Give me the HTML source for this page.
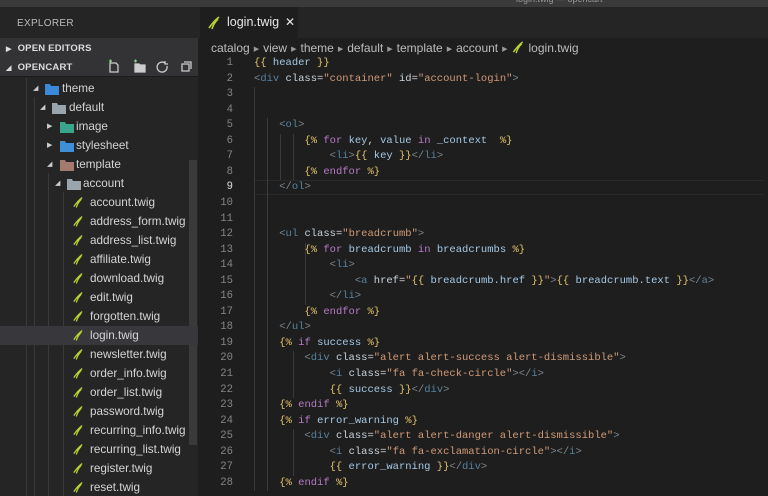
<!DOCTYPE html>
<html><head><meta charset="utf-8"><style>
*{margin:0;padding:0;box-sizing:border-box}
html{width:768px;height:496px;overflow:hidden}
body{width:768px;height:496px;overflow:hidden;background:#1e1e1e;font-family:"Liberation Sans",sans-serif;position:relative}
.title{position:absolute;left:0;top:0;width:768px;height:7px;background:#3a3a3a;color:#999;font-size:9px;line-height:2px;text-align:left;overflow:hidden}
.title span{position:absolute;left:516px;top:-2px}
.side{position:absolute;left:0;top:7px;width:198px;height:489px;background:#252526;overflow:hidden}
.tabs{position:absolute;left:198px;top:7px;width:570px;height:31px;background:#252526}
.tab{position:absolute;left:2px;top:0;width:98px;height:31px;background:#1e1e1e;color:#e8e8e8;font-size:12.5px;line-height:31px}
.exp{position:absolute;left:17px;top:11px;font-size:10px;color:#bbb;letter-spacing:.3px}
.sec{position:absolute;left:0;top:31px;width:198px;height:39px;background:#333336;border-bottom:1px solid #1b1b1b}
.sec div{position:absolute;left:17px;font-size:9.5px;font-weight:bold;color:#ddd;letter-spacing:.2px}
.row{position:absolute;height:19px;line-height:19px;font-size:11.7px;color:#d4d4d4;white-space:nowrap;left:0;width:198px}
.row.sel{background:#38383c}
.arr{position:absolute;font-size:7px;color:#ccc}
.guide{position:absolute;width:1px;background:#3a3a3a}
.sb{position:absolute;left:189px;top:153px;width:8px;height:285px;background:#3a3a3b}
.crumb{position:absolute;left:211px;top:41px;font-size:12px;color:#bdbdbd;white-space:nowrap}
.crumb i{font-style:normal;font-size:7px;color:#999;margin:0 4px;position:relative;top:-1px}
.code{position:absolute;left:0;top:56px;width:768px;height:440px;overflow:hidden;font-family:"Liberation Mono",monospace;font-size:10.5px;white-space:pre}
.ln{position:absolute;left:200px;width:33px;text-align:right;color:#858585;font-family:"Liberation Mono",monospace;font-size:10.6px}
.cl{position:absolute;left:254px;color:#d4d4d4}
.ln,.cl{height:15.55px;line-height:15.55px}
.t{color:#56819f}.b{color:#7e8a93}.a{color:#c8d3dc}.s{color:#d19a78}.y{color:#e3c26a}.k{color:#b77ac7}.v{color:#a6c9e6}
.cur{position:absolute;left:254px;width:510px;height:15px;border-top:1px solid #2a2a2a;border-bottom:1px solid #2a2a2a}
.vg{position:absolute;width:1px;background:#3a3a3a}
</style></head><body>
<div class="title"><span>login.twig — opencart</span></div>
<div class="side">
<div class="exp">EXPLORER</div>
<div class="sec"><div style="top:5px"><span style="font-size:7px;margin-left:-11px;margin-right:6px">▶</span>OPEN EDITORS</div><div style="top:24px"><span style="font-size:7px;margin-left:-11px;margin-right:6px">◢</span>OPENCART</div>
<svg style="position:absolute;left:106px;top:20px" width="90" height="16" viewBox="0 0 90 16"><g fill="none" stroke="#ccc" stroke-width="1.3"><path d="M4 5v9h8V7l-2-2z"/><path d="M3 3h3M4.5 1.5v3" stroke="#8c8"/><path d="M29 6h4l1 1h5v7h-10z" fill="#ccc"/><path d="M28 3h3M29.5 1.5v3" stroke="#8c8"/><path d="M59 5a5 5 0 1 0 2 3"/><path d="M59 3v3h3"/><path d="M76 6h7v7h-7z"/><path d="M78 4h7v7"/></g></svg>
</div>
<div class="guide" style="left:26px;top:71px;height:418px"></div>
<div class="guide" style="left:34px;top:90px;height:399px"></div>
<div class="guide" style="left:48px;top:166px;height:323px"></div>
<div class="guide" style="left:63px;top:185px;height:304px"></div>
<div class="sb"></div>
<div id="tree"></div>
</div>
<div class="tabs"><div class="tab"><svg style="position:absolute;left:8px;top:9px" width="12" height="14" viewBox="0 0 12 14"><path d="M1 12c2-3 5-7 10-11M4 13c1-4 3-7 6-10" stroke="#b5d334" stroke-width="1.6" fill="none"/></svg><span style="position:absolute;left:27px">login.twig</span><span style="position:absolute;left:85px;font-size:12px">✕</span></div></div>
<div class="crumb">catalog<i>▶</i>view<i>▶</i>theme<i>▶</i>default<i>▶</i>template<i>▶</i>account<i>▶</i><svg width="12" height="13" viewBox="0 0 12 14" style="vertical-align:-2px;margin-right:5px"><path d="M1 12c2-3 5-7 10-11M4 13c1-4 3-7 6-10" stroke="#b5d334" stroke-width="1.6" fill="none"/></svg>login.twig</div>
<div class="code" id="code"></div>
<script>
var tw='<svg width="10" height="13" viewBox="0 0 12 14"><path d="M1 12c2-3 5-7 10-11M4 13c1-4 3-7 6-10" stroke="#b5d334" stroke-width="1.6" fill="none"/></svg>';
function fold(c){return '<svg width="14" height="12" viewBox="0 0 14 12"><path d="M0 1h5l1 2h8v9H0z" fill="'+c+'"/></svg>'}
var rows=[
[33,45,62,'◢',fold('#3b8ad9'),'theme'],
[40,52,69,'◢',fold('#9aa4ad'),'default'],
[47,60,76,'▶',fold('#3aa58a'),'image'],
[47,60,76,'▶',fold('#3f8fd8'),'stylesheet'],
[47,60,76,'◢',fold('#a47a6e'),'template'],
[55,67,83,'◢',fold('#9aa4ad'),'account']];
var files=['account.twig','address_form.twig','address_list.twig','affiliate.twig','download.twig','edit.twig','forgotten.twig','login.twig','newsletter.twig','order_info.twig','order_list.twig','password.twig','recurring_info.twig','recurring_list.twig','register.twig','reset.twig'];
var h='';var y=71.5;
rows.forEach(function(r){h+='<div class="row" style="top:'+y+'px"><span class="arr" style="left:'+r[0]+'px">'+r[3]+'</span><span style="position:absolute;left:'+r[1]+'px;top:3px;height:12px">'+r[4]+'</span><span style="position:absolute;left:'+r[2]+'px">'+r[5]+'</span></div>';y+=19;});
files.forEach(function(f){h+='<div class="row'+(f=='login.twig'?' sel':'')+'" style="top:'+y+'px"><span style="position:absolute;left:73px;top:3px">'+tw+'</span><span style="position:absolute;left:90px">'+f+'</span></div>';y+=19;});
document.getElementById('tree').innerHTML=h;
var L=[
'<span class="y">{{</span> <span class="v">header</span> <span class="y">}}</span>',
'<span class="b">&lt;</span><span class="t">div</span> <span class="a">class</span>=<span class="s">"container"</span> <span class="a">id</span>=<span class="s">"account-login"</span><span class="b">&gt;</span>',
'','',
'    <span class="b">&lt;</span><span class="t">ol</span><span class="b">&gt;</span>',
'        <span class="y">{%</span> <span class="k">for</span> <span class="v">key</span>, <span class="v">value</span> <span class="k">in</span> <span class="v">_context</span>  <span class="y">%}</span>',
'            <span class="b">&lt;</span><span class="t">li</span><span class="b">&gt;</span><span class="y">{{</span> <span class="v">key</span> <span class="y">}}</span><span class="b">&lt;/</span><span class="t">li</span><span class="b">&gt;</span>',
'        <span class="y">{%</span> <span class="k">endfor</span> <span class="y">%}</span>',
'    <span class="b">&lt;/</span><span class="t">ol</span><span class="b">&gt;</span>',
'','',
'    <span class="b">&lt;</span><span class="t">ul</span> <span class="a">class</span>=<span class="s">"breadcrumb"</span><span class="b">&gt;</span>',
'        <span class="y">{%</span> <span class="k">for</span> <span class="v">breadcrumb</span> <span class="k">in</span> <span class="v">breadcrumbs</span> <span class="y">%}</span>',
'            <span class="b">&lt;</span><span class="t">li</span><span class="b">&gt;</span>',
'                <span class="b">&lt;</span><span class="t">a</span> <span class="a">href</span>=<span class="s">"</span><span class="y">{{</span> <span class="v">breadcrumb.href</span> <span class="y">}}</span><span class="s">"</span><span class="b">&gt;</span><span class="y">{{</span> <span class="v">breadcrumb.text</span> <span class="y">}}</span><span class="b">&lt;/</span><span class="t">a</span><span class="b">&gt;</span>',
'            <span class="b">&lt;/</span><span class="t">li</span><span class="b">&gt;</span>',
'        <span class="y">{%</span> <span class="k">endfor</span> <span class="y">%}</span>',
'    <span class="b">&lt;/</span><span class="t">ul</span><span class="b">&gt;</span>',
'    <span class="y">{%</span> <span class="k">if</span> <span class="v">success</span> <span class="y">%}</span>',
'        <span class="b">&lt;</span><span class="t">div</span> <span class="a">class</span>=<span class="s">"alert alert-success alert-dismissible"</span><span class="b">&gt;</span>',
'            <span class="b">&lt;</span><span class="t">i</span> <span class="a">class</span>=<span class="s">"fa fa-check-circle"</span><span class="b">&gt;&lt;/</span><span class="t">i</span><span class="b">&gt;</span>',
'            <span class="y">{{</span> <span class="v">success</span> <span class="y">}}</span><span class="b">&lt;/</span><span class="t">div</span><span class="b">&gt;</span>',
'    <span class="y">{%</span> <span class="k">endif</span> <span class="y">%}</span>',
'    <span class="y">{%</span> <span class="k">if</span> <span class="v">error_warning</span> <span class="y">%}</span>',
'        <span class="b">&lt;</span><span class="t">div</span> <span class="a">class</span>=<span class="s">"alert alert-danger alert-dismissible"</span><span class="b">&gt;</span>',
'            <span class="b">&lt;</span><span class="t">i</span> <span class="a">class</span>=<span class="s">"fa fa-exclamation-circle"</span><span class="b">&gt;&lt;/</span><span class="t">i</span><span class="b">&gt;</span>',
'            <span class="y">{{</span> <span class="v">error_warning</span> <span class="y">}}</span><span class="b">&lt;/</span><span class="t">div</span><span class="b">&gt;</span>',
'    <span class="y">{%</span> <span class="k">endif</span> <span class="y">%}</span>'];
var c='<div class="cur" style="top:'+(8*15.55)+'px"></div>';
c+='<div class="vg" style="left:254px;top:'+(2*15.55)+'px;height:'+(26*15.55)+'px"></div>';
c+='<div class="vg" style="left:267px;top:'+(4*15.55)+'px;height:'+(24*15.55)+'px"></div>';
c+='<div class="vg" style="left:280px;top:'+(5*15.55)+'px;height:'+(3*15.55)+'px"></div>';
c+='<div class="vg" style="left:293px;top:'+(5*15.55)+'px;height:'+(3*15.55)+'px"></div>';
c+='<div class="vg" style="left:305px;top:'+(12*15.55)+'px;height:'+(4*15.55)+'px"></div>';
c+='<div class="vg" style="left:293px;top:'+(19*15.55)+'px;height:'+(3*15.55)+'px"></div>';
c+='<div class="vg" style="left:293px;top:'+(24*15.55)+'px;height:'+(3*15.55)+'px"></div>';
L.forEach(function(s,i){
 var n=i+1;
 c+='<div class="ln" style="top:'+(i*15.55)+'px;'+(n==9?'color:#ddd':'')+'">'+n+'</div><div class="cl" style="top:'+(i*15.55)+'px">'+s+'</div>';
});
document.getElementById('code').innerHTML=c;
</script>
</body></html>
